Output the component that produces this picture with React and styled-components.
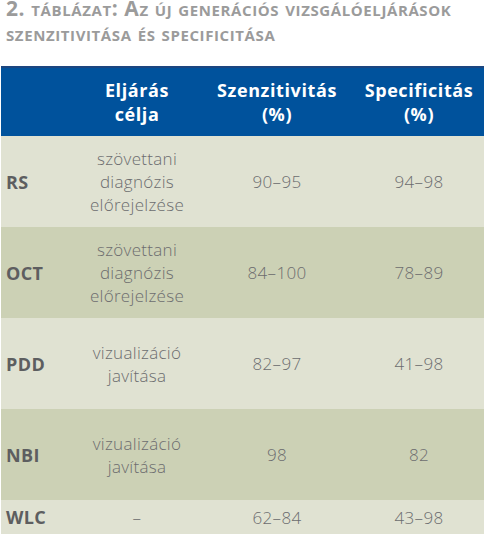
import React from 'react';
import styled, {createGlobalStyle} from 'styled-components';

const GlobalStyle = createGlobalStyle`
  body {
    margin: 0;
    background: #fff;
    font-family: "Open Sans", "Liberation Sans", sans-serif;
  }
`;

const rows = [
    {id: 'RS', goal: ['szövettani', 'diagnózis', 'előrejelzése'], sens: '90–95', spec: '94–98'},
    {id: 'OCT', goal: ['szövettani', 'diagnózis', 'előrejelzése'], sens: '84–100', spec: '78–89'},
    {id: 'PDD', goal: ['vizualizáció', 'javítása'], sens: '82–97', spec: '41–98'},
    {id: 'NBI', goal: ['vizualizáció', 'javítása'], sens: '98', spec: '82'},
    {id: 'WLC', goal: ['–'], sens: '62–84', spec: '43–98', short: true},
];

const App = () => {
    return (
        <Page>
            <GlobalStyle/>
            <Title>
                <TitleLine>2. táblázat: Az új generációs vizsgálóeljárások</TitleLine>
                <TitleLine>szenzitivitása és specificitása</TitleLine>
            </Title>
            <Table>
                <colgroup>
                    <col style={{width: 73}}/>
                    <col style={{width: 126}}/>
                    <col style={{width: 154}}/>
                    <col style={{width: 130}}/>
                </colgroup>
                <thead>
                    <tr>
                        <Th/>
                        <Th>Eljárás<br/>célja</Th>
                        <Th>Szenzitivitás<br/>(%)</Th>
                        <Th>Specificitás<br/>(%)</Th>
                    </tr>
                </thead>
                <tbody>
                    {rows.map((row, i) => {
                        return (
                            <Row key={row.id} dark={i % 2 === 1} short={row.short}>
                                <Label>{row.id}</Label>
                                <Cell>{row.goal.map((line, j) => (
                                    <React.Fragment key={j}>{j > 0 && <br/>}{line}</React.Fragment>
                                ))}</Cell>
                                <Cell>{row.sens}</Cell>
                                <Cell>{row.spec}</Cell>
                            </Row>
                        )
                    })}
                </tbody>
            </Table>
        </Page>
    );
};

const Page = styled.div`
  width: 486px;
  height: 536px;
  overflow: hidden;
`;

const Title = styled.h2`
  margin: -4px 0 0;
  padding: 0 0 0 6px;
  height: 70px;
  box-sizing: border-box;
  display: flex;
  flex-direction: column;
  color: #9b9b9b;
  font-size: 21px;
  font-weight: 700;
  font-variant: small-caps;
  letter-spacing: 0.6px;
  white-space: nowrap;
`;

const TitleLine = styled.div`
  line-height: 25px;
`;

const Table = styled.table`
  margin-left: 1px;
  width: 483px;
  table-layout: fixed;
  border-collapse: collapse;
  border-top: 2px solid #1c4680;
`;

const Th = styled.th`
  background: #00529c;
  color: #fff;
  height: 68px;
  padding: 0;
  font-size: 18px;
  font-weight: 700;
  line-height: 24px;
  letter-spacing: 0.6px;
  text-align: center;
  vertical-align: middle;
`;

const Row = styled.tr`
  background: ${props => (props.dark ? '#ccd1b5' : '#e0e2d2')};
  height: ${props => (props.short ? '34px' : '91px')};
`;

const Label = styled.td`
  padding: 0 0 0 5px;
  color: #5d5e60;
  font-size: 18px;
  font-weight: 700;
  letter-spacing: 0.4px;
  vertical-align: middle;
`;

const Cell = styled.td`
  padding: 0;
  color: #6c6d6f;
  font-size: 17px;
  font-weight: 300;
  line-height: 23px;
  letter-spacing: 0.3px;
  text-align: center;
  vertical-align: middle;
`;

export default App;
